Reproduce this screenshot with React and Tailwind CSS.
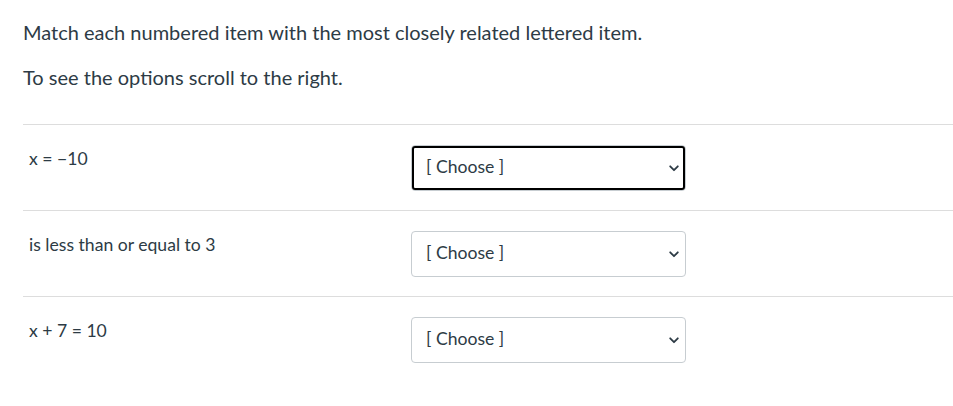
import React from "react";

const Chevron = () => (
  <svg width="10" height="7" viewBox="0 0 10 7" className="shrink-0">
    <path d="M1.2 1.3 L5 5.2 L8.8 1.3" fill="none" stroke="#2d3b45" strokeWidth="1.8" strokeLinecap="round" strokeLinejoin="round" />
  </svg>
);

const Select = ({ focused }) => (
  <div
    className={
      "w-[275px] h-[46px] bg-white border border-[#c7cdd1] rounded-[4px] flex items-center justify-between pl-[14px] pr-[6px] text-[17.6px] leading-[26.4px] text-[#2d3b45] " +
      (focused ? "outline-2 outline-black -outline-offset-3 outline-solid" : "")
    }
  >
    <span className="pb-[2px]">[ Choose ]</span>
    <Chevron />
  </div>
);

const Row = ({ label, focused }) => (
  <div className="flex border-t border-[#dddddd] pt-[20px] pb-[19px]">
    <div className="w-[388px] shrink-0 pl-[6px] pt-[1px] text-[17.6px] leading-[26.4px] text-[#2d3b45]">{label}</div>
    <Select focused={focused} />
  </div>
);

export default function App() {
  return (
    <div className="bg-white min-h-[406px] pl-[23px] pt-[17px]" style={{ fontFamily: "Lato, 'Noto Sans', sans-serif" }}>
      <p className="text-[20px] leading-[30px] text-[#2d3b45]">Match each numbered item with the most closely related lettered item.</p>
      <p className="mt-[15px] text-[20px] leading-[30px] text-[#2d3b45]">To see the options scroll to the right.</p>
      <div className="mt-[32px]">
        <Row label="x = −10" focused />
        <Row label="is less than or equal to 3" />
        <Row label="x + 7 = 10" />
      </div>
    </div>
  );
}
